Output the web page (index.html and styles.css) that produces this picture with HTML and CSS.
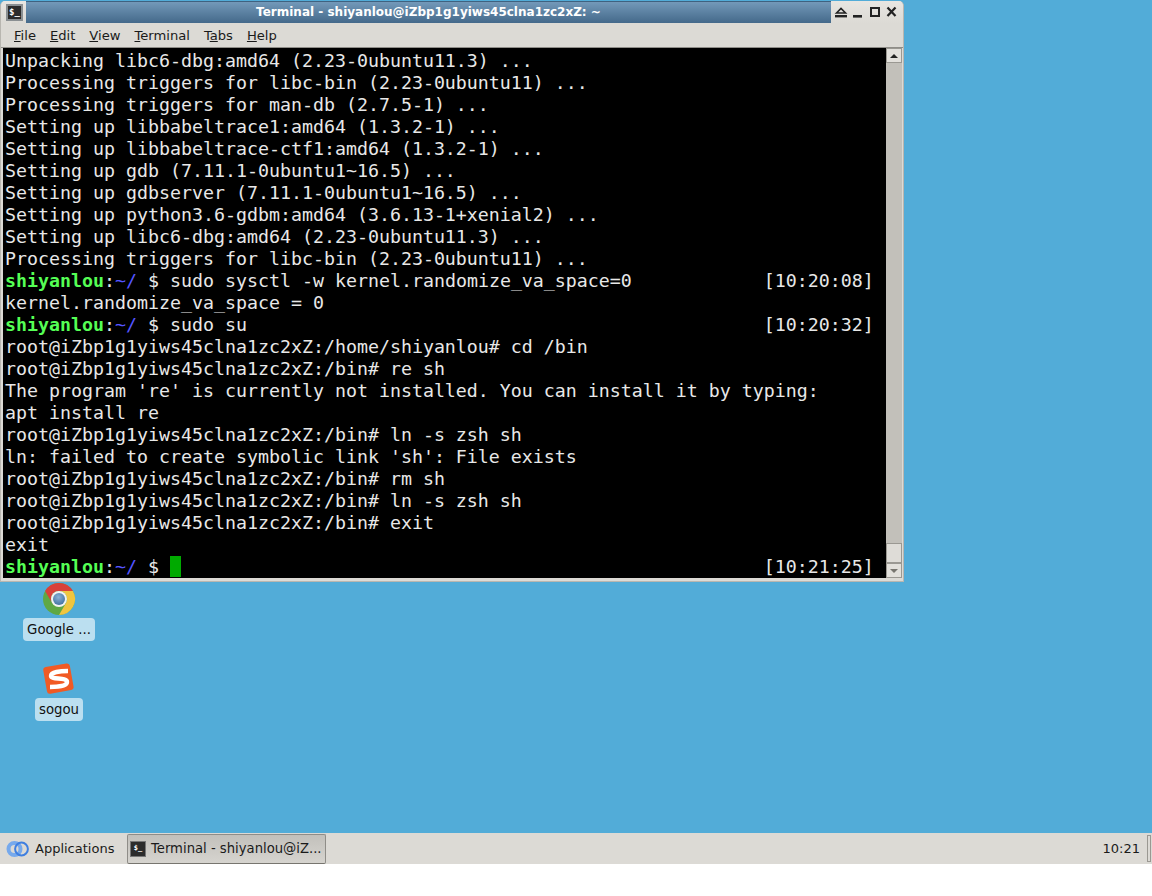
FILE: index.html
```html
<!DOCTYPE html>
<html lang="en">
<head>
<meta charset="utf-8">
<title>Terminal</title>
<link rel="stylesheet" href="styles.css">
</head>
<body>
<main class="desktop">
  <section class="window">
    <header class="titlebar">
      <div class="title-icon"><span class="prompt-glyph">$_</span></div>
      <div class="title-fill"><span class="title-text">Terminal - shiyanlou@iZbp1g1yiws45clna1zc2xZ: ~</span></div>
      <div class="title-buttons">
        <svg class="wm" width="16" height="16" viewBox="0 0 16 16"><path d="M3.5 9 L8 4.5 L12.5 9 Z" fill="none" stroke="#222" stroke-width="1.6"/><rect x="2" y="11" width="12" height="2.4" fill="#222"/></svg>
        <svg class="wm" width="16" height="16" viewBox="0 0 16 16"><rect x="3" y="11" width="9" height="2.6" fill="#222"/></svg>
        <svg class="wm" width="16" height="16" viewBox="0 0 16 16"><rect x="4" y="4" width="8" height="8" fill="none" stroke="#222" stroke-width="2"/></svg>
        <svg class="wm" width="16" height="16" viewBox="0 0 16 16"><path d="M3.5 3.5 L11.5 12 M11.5 3.5 L3.5 12" stroke="#222" stroke-width="2.2"/></svg>
      </div>
    </header>
    <nav class="menubar">
      <span class="menu-item"><u>F</u>ile</span>
      <span class="menu-item"><u>E</u>dit</span>
      <span class="menu-item"><u>V</u>iew</span>
      <span class="menu-item"><u>T</u>erminal</span>
      <span class="menu-item">T<u>a</u>bs</span>
      <span class="menu-item"><u>H</u>elp</span>
    </nav>
    <div class="term-row">
      <pre class="terminal">Unpacking libc6-dbg:amd64 (2.23-0ubuntu11.3) ...
Processing triggers for libc-bin (2.23-0ubuntu11) ...
Processing triggers for man-db (2.7.5-1) ...
Setting up libbabeltrace1:amd64 (1.3.2-1) ...
Setting up libbabeltrace-ctf1:amd64 (1.3.2-1) ...
Setting up gdb (7.11.1-0ubuntu1~16.5) ...
Setting up gdbserver (7.11.1-0ubuntu1~16.5) ...
Setting up python3.6-gdbm:amd64 (3.6.13-1+xenial2) ...
Setting up libc6-dbg:amd64 (2.23-0ubuntu11.3) ...
Processing triggers for libc-bin (2.23-0ubuntu11) ...
<b class="user">shiyanlou</b>:<span class="path">~/</span> $ sudo sysctl -w kernel.randomize_va_space=0            [10:20:08]
kernel.randomize_va_space = 0
<b class="user">shiyanlou</b>:<span class="path">~/</span> $ sudo su                                               [10:20:32]
root@iZbp1g1yiws45clna1zc2xZ:/home/shiyanlou# cd /bin
root@iZbp1g1yiws45clna1zc2xZ:/bin# re sh
The program 're' is currently not installed. You can install it by typing:
apt install re
root@iZbp1g1yiws45clna1zc2xZ:/bin# ln -s zsh sh
ln: failed to create symbolic link 'sh': File exists
root@iZbp1g1yiws45clna1zc2xZ:/bin# rm sh
root@iZbp1g1yiws45clna1zc2xZ:/bin# ln -s zsh sh
root@iZbp1g1yiws45clna1zc2xZ:/bin# exit
exit
<b class="user">shiyanlou</b>:<span class="path">~/</span> $ <span class="cursor"> </span>                                                     [10:21:25]</pre>
      <div class="scrollbar">
        <div class="scroll-btn"><span class="arrow-up"></span></div>
        <div class="scroll-track"><div class="scroll-thumb"></div></div>
        <div class="scroll-btn"><span class="arrow-down"></span></div>
      </div>
    </div>
  </section>

  <div class="desk-icon icon-chrome">
    <svg width="34" height="34" viewBox="0 0 34 34">
      <defs>
        <radialGradient id="lens" cx="0.45" cy="0.35" r="0.7"><stop offset="0" stop-color="#8bb2d8"/><stop offset="1" stop-color="#3f6f9f"/></radialGradient>
      </defs>
      <circle cx="17" cy="17" r="16" fill="#5fa844"/>
      <path d="M30.9 9 A16 16 0 0 0 3.1 9 L10 21 A8 8 0 0 1 17 9 Z" fill="#d9413b"/>
      <path d="M30.9 9 A16 16 0 0 1 17 33 L24 21 A8 8 0 0 0 17 9 Z" fill="#f0c53f"/>
      <circle cx="17" cy="17" r="8" fill="#f2f2f2"/>
      <circle cx="17" cy="17" r="6" fill="url(#lens)"/>
    </svg>
    <span class="desk-label">Google ...</span>
  </div>
  <div class="desk-icon icon-sogou">
    <svg width="34" height="34" viewBox="0 0 34 34">
      <rect x="3" y="3" width="27" height="27" rx="3" fill="#f15a24" transform="rotate(-10 17 17)"/>
      <path d="M26 9 C18 9 9 10 9 14 C9 18 25 15 25 20 C25 24 16 25 8 25" fill="none" stroke="#fff" stroke-width="4.4"/>
    </svg>
    <span class="desk-label">sogou</span>
  </div>
</main>
<footer class="panel">
  <div class="apps">
    <svg width="24" height="18" viewBox="0 0 24 18"><circle cx="8.5" cy="9" r="6" fill="none" stroke="#76a9ec" stroke-width="4"/><circle cx="15.5" cy="9" r="6.4" fill="none" stroke="#3f7fe0" stroke-width="2"/></svg>
    <span>Applications</span>
  </div>
  <div class="task">
    <div class="task-icon"><span class="task-glyph">$_</span></div>
    <span class="task-text">Terminal - shiyanlou@iZ...</span>
  </div>
  <div class="clock">10:21</div>
  <div class="handle"></div>
</footer>
<div class="below"></div>
</body>
</html>
```

FILE: styles.css
```css
html, body { margin: 0; padding: 0; }
body {
  width: 1152px;
  height: 896px;
  overflow: hidden;
  background: #fff;
  display: flex;
  flex-direction: column;
  font-family: "DejaVu Sans", sans-serif;
}
.desktop {
  position: relative;
  height: 833px;
  background: #52acd8;
  flex: none;
}
.window {
  position: absolute;
  left: 0;
  top: 1px;
  width: 904px;
  height: 581px;
  box-sizing: border-box;
  background: #dcdad5;
  border: 1px solid #b8b6b0;
  border-top: 0;
  border-radius: 5px 5px 0 0;
  display: flex;
  flex-direction: column;
  overflow: hidden;
}
.titlebar {
  height: 22px;
  display: flex;
  flex: none;
  background: linear-gradient(#e8e6e2, #dcdad5);
}
.title-icon {
  width: 17px;
  height: 17px;
  box-sizing: border-box;
  margin: 3px 3px 0 5px;
  display: flex;
  align-items: center;
  justify-content: center;
  flex: none;
  background: #2c2c2c;
  border: 2px solid #8a8f92;
}
.prompt-glyph, .task-glyph {
  color: #fff;
  font-family: "DejaVu Sans Mono", monospace;
  font-size: 9px;
  font-weight: bold;
  line-height: 1;
}
.title-fill {
  flex: 1;
  background: linear-gradient(#7399b9, #44698a);
  border-top: 1px solid #3f6280;
  padding-bottom: 2px;
  box-sizing: border-box;
  display: flex;
  justify-content: center;
  align-items: center;
}
.title-text {
  color: #fff;
  font-size: 12px;
  font-weight: bold;
}
.title-buttons {
  width: 72px;
  padding-left: 2px;
  display: flex;
  align-items: center;
  gap: 1px;
  flex: none;
  box-sizing: border-box;
}
.wm { flex: none; }
.menubar {
  height: 25px;
  flex: none;
  display: flex;
  align-items: center;
  gap: 14px;
  padding-left: 13px;
  font-size: 13.12px;
  color: #1a1a1a;
  border-bottom: 1px solid #8f8d88;
  box-sizing: border-box;
}
.menu-item { white-space: nowrap; }
.term-row {
  display: flex;
  flex: none;
  height: 530px;
  padding-left: 2px;
  box-sizing: border-box;
}
.terminal {
  margin: 0;
  width: 883px;
  height: 530px;
  box-sizing: border-box;
  padding: 2px 0 0 2px;
  background: #000;
  color: #e8e8e8;
  font-family: "DejaVu Sans Mono", monospace;
  font-size: 18.27px;
  line-height: 22px;
  overflow: hidden;
}
.user { color: #55ff55; font-weight: bold; }
.path { color: #5555ff; }
.cursor { background: #00aa00; }
.scrollbar {
  width: 16px;
  display: flex;
  flex-direction: column;
  background: #c2c0ba;
  flex: none;
}
.scroll-btn {
  height: 15px;
  flex: none;
  box-sizing: border-box;
  border: 1px solid #9a9892;
  background: #e2e0db;
  display: flex;
  align-items: center;
  justify-content: center;
}
.arrow-up {
  width: 0; height: 0;
  border-left: 4px solid transparent;
  border-right: 4px solid transparent;
  border-bottom: 4px solid #222;
}
.arrow-down {
  width: 0; height: 0;
  border-left: 4px solid transparent;
  border-right: 4px solid transparent;
  border-top: 4px solid #77756f;
}
.scroll-track {
  flex: 1;
  display: flex;
  flex-direction: column;
  justify-content: flex-end;
}
.scroll-thumb {
  height: 20px;
  box-sizing: border-box;
  border: 1px solid #9a9892;
  background: #dedcd7;
}
.desk-icon {
  position: absolute;
  display: flex;
  flex-direction: column;
  align-items: center;
  gap: 2px;
  width: 72px;
}
.icon-chrome { left: 23px; top: 582px; }
.icon-sogou { left: 23px; top: 662px; }
.desk-label {
  background: #bbdff0;
  border-radius: 4px;
  height: 23px;
  line-height: 23px;
  padding: 0 4px;
  font-size: 13.3px;
  color: #111;
  white-space: nowrap;
}
.panel {
  height: 31px;
  flex: none;
  background: #dcdad5;
  display: flex;
  align-items: center;
  font-size: 13px;
  color: #1a1a1a;
}
.apps {
  display: flex;
  align-items: center;
  gap: 5px;
  padding-left: 6px;
  width: 127px;
  box-sizing: border-box;
  flex: none;
}
.task {
  width: 199px;
  height: 30px;
  box-sizing: border-box;
  border: 1px solid #8f8d88;
  border-bottom-color: #77756f;
  border-radius: 2px;
  background: linear-gradient(#c2c0bb, #d6d4cf);
  display: flex;
  align-items: center;
  gap: 5px;
  padding-left: 2px;
  white-space: nowrap;
  flex: none;
}
.task-text { font-size: 13.2px; }
.task-icon {
  width: 16px;
  height: 16px;
  box-sizing: border-box;
  background: #2c2c2c;
  border: 1px solid #777;
  display: flex;
  align-items: center;
  justify-content: center;
  flex: none;
}
.task-glyph { font-size: 7px; }
.clock { margin-left: auto; margin-right: 7px; }
.handle {
  width: 4px;
  height: 27px;
  box-sizing: border-box;
  border: 1px solid #9a9892;
  margin-right: 1px;
  flex: none;
}
.below { flex: 1; background: #fff; }
```
